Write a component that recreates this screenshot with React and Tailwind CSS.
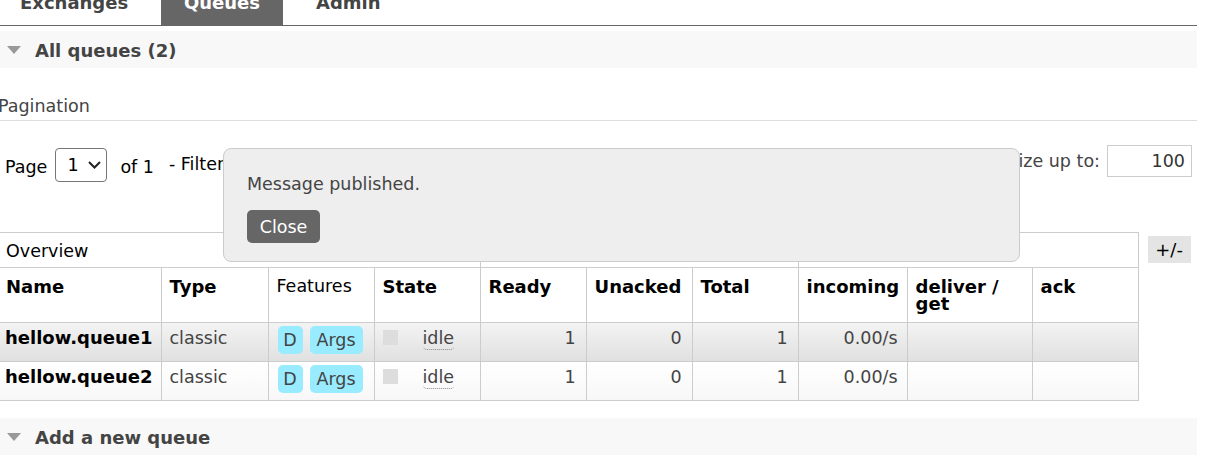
const COLS = [163, 107, 106, 106, 106, 106, 106, 109, 125, 106]

const QUEUES = [
  { name: 'hellow.queue1', ready: 1, unacked: 0, total: 1, incoming: '0.00/s' },
  { name: 'hellow.queue2', ready: 1, unacked: 0, total: 1, incoming: '0.00/s' },
]

function SectionHeader({ title }) {
  return (
    <div className="flex items-center h-[37px] bg-[#f8f8f8]">
      <svg width="14" height="8" viewBox="0 0 14 8" className="ml-[7px]">
        <path d="M0 0 L14 0 L7 8 Z" fill="#999" />
      </svg>
      <span className="ml-[14px] pt-[1px] font-bold text-[#444] text-[18px]">{title}</span>
    </div>
  )
}

export default function App() {
  return (
    <div className="relative w-[1217px] h-[474px] overflow-hidden bg-white text-[17.5px] text-[#444] font-['DejaVu_Sans',Verdana,sans-serif]">
      <div className="w-[1197px]">
        {/* tabs, scrolled so the top is cut */}
        <div className="h-[26px] overflow-hidden border-b border-[#666]">
          <div className="flex -mt-[20px] h-[45px] font-bold text-[#444] text-[18px]">
            <div className="w-[161px] pl-[20px] flex items-center">Exchanges</div>
            <div className="w-[122px] flex items-center justify-center bg-[#666] text-white">Queues</div>
            <div className="pl-[33px] flex items-center">Admin</div>
          </div>
        </div>

        <div className="mt-[5px]">
          <SectionHeader title="All queues (2)" />
        </div>

        <div className="mt-[28px] -ml-[2px] leading-[20px] pb-[4px] border-b border-[#ddd]">
          Pagination
        </div>

        <div className="mt-[27px] flex items-start text-black">
          <span className="ml-[5px] mt-[6px]">Page</span>
          <div className="ml-[8px] w-[52px] h-[34px] border border-[#767676] rounded-[4px] flex items-center">
            <span className="ml-[11px]">1</span>
            <svg width="13" height="8" viewBox="0 0 13 8" className="ml-[9px]">
              <path d="M1 1 L6.5 6.5 L12 1" stroke="#222" strokeWidth="2" fill="none" />
            </svg>
          </div>
          <span className="ml-[13px] mt-[6px]">of 1</span>
          <span className="ml-[15px] mt-[3px]">- Filter:</span>
          <span className="ml-auto mt-[0px] text-[#444]">Displaying 2 items , page size up to:</span>
          <div className="ml-[7px] mr-[5px] -mt-[3px] w-[85px] h-[32px] border border-[#ccc] text-right pr-[6px] leading-[30px] text-[#333]">
            100
          </div>
        </div>

        <div className="mt-[50px] flex items-start">
          <table className="-ml-[2px] table-fixed border-collapse w-[1140px]">
            <colgroup>
              {COLS.map((w, i) => (
                <col key={i} style={{ width: w }} />
              ))}
            </colgroup>
            <thead>
              <tr className="h-[35px]">
                <th colSpan={4} className="border-t border-b border-r border-[#ccc] text-left font-normal text-black px-[8px] pt-[3px] align-middle">
                  Overview
                </th>
                <th colSpan={3} className="border border-[#ccc] text-left font-normal text-black px-[8px] align-middle">
                  Messages
                </th>
                <th colSpan={3} className="border border-[#ccc] text-left font-normal text-black px-[8px] align-middle">
                  Message rates
                </th>
              </tr>
              <tr className="h-[55px] text-black leading-[17px]">
                {['Name', 'Type', 'Features', 'State', 'Ready', 'Unacked', 'Total', 'incoming', 'deliver / get', 'ack'].map(
                  (h, i) => (
                    <th
                      key={h}
                      className={`border-b border-[#ccc] ${i === 0 ? '' : 'border-l'} text-left align-top pt-[10px] px-[8px] ${
                        h === 'Features' ? 'font-normal text-[17.5px]' : 'font-bold text-[18px]'
                      } ${i === 9 ? 'border-r' : ''}`}
                    >
                      {h}
                    </th>
                  )
                )}
              </tr>
            </thead>
            <tbody>
              {QUEUES.map((q, i) => (
                <tr
                  key={q.name}
                  className={`h-[39px] ${
                    i === 0
                      ? 'bg-gradient-to-b from-[#f3f3f3] to-[#e0e0e0]'
                      : 'bg-gradient-to-b from-white to-[#f7f7f7]'
                  }`}
                >
                  <td className="border-b border-[#ccc] px-[7px] align-top pt-[2px] leading-[26px] font-bold text-[18px] text-black whitespace-nowrap">
                    {q.name}
                  </td>
                  <td className="border-b border-l border-[#ccc] px-[8px] align-top pt-[2px] leading-[26px]">classic</td>
                  <td className="border-b border-l border-[#ccc] px-[9px] align-top pt-[3px]">
                    <div className="flex gap-[7px]">
                      <span className="h-[28px] w-[25px] rounded-[5px] bg-[#99ebff] flex items-center justify-center">D</span>
                      <span className="h-[28px] w-[53px] rounded-[5px] bg-[#99ebff] flex items-center justify-center">Args</span>
                    </div>
                  </td>
                  <td className="border-b border-l border-[#ccc] px-[8px] align-top pt-[2px] leading-[26px]">
                    <div className="flex items-start">
                      <span className="mt-[5px] w-[15px] h-[15px] bg-[#ddd]" />
                      <span className="ml-[25px] leading-[22px] mt-[2px] border-b border-dotted border-[#888] rounded-[4px]">idle</span>
                    </div>
                  </td>
                  <td className="border-b border-l border-[#ccc] pr-[10px] text-right align-top pt-[2px] leading-[26px]">{q.ready}</td>
                  <td className="border-b border-l border-[#ccc] pr-[10px] text-right align-top pt-[2px] leading-[26px]">{q.unacked}</td>
                  <td className="border-b border-l border-[#ccc] pr-[10px] text-right align-top pt-[2px] leading-[26px]">{q.total}</td>
                  <td className="border-b border-l border-[#ccc] pr-[9px] text-right align-top pt-[2px] leading-[26px]">{q.incoming}</td>
                  <td className="border-b border-l border-[#ccc]" />
                  <td className="border-b border-l border-r border-[#ccc]" />
                </tr>
              ))}
            </tbody>
          </table>
          <div className="ml-[9px] mt-[4px] w-[43px] h-[27px] bg-[#e4e4e4] text-black text-[18px] flex items-center justify-center">
            +/-
          </div>
        </div>

        <div className="mt-[17px]">
          <SectionHeader title="Add a new queue" />
        </div>
      </div>

      {/* message popup */}
      <div className="absolute left-[223px] top-[148px] w-[797px] h-[114px] bg-[#eee] border border-[#ccc] rounded-[8px] pl-[23px] pt-[24px]">
        <div className="leading-[22px]">Message published.</div>
        <button className="mt-[15px] w-[73px] h-[33px] pt-[2px] rounded-[5px] bg-[#666] text-white text-[17.5px]">Close</button>
      </div>
    </div>
  )
}
